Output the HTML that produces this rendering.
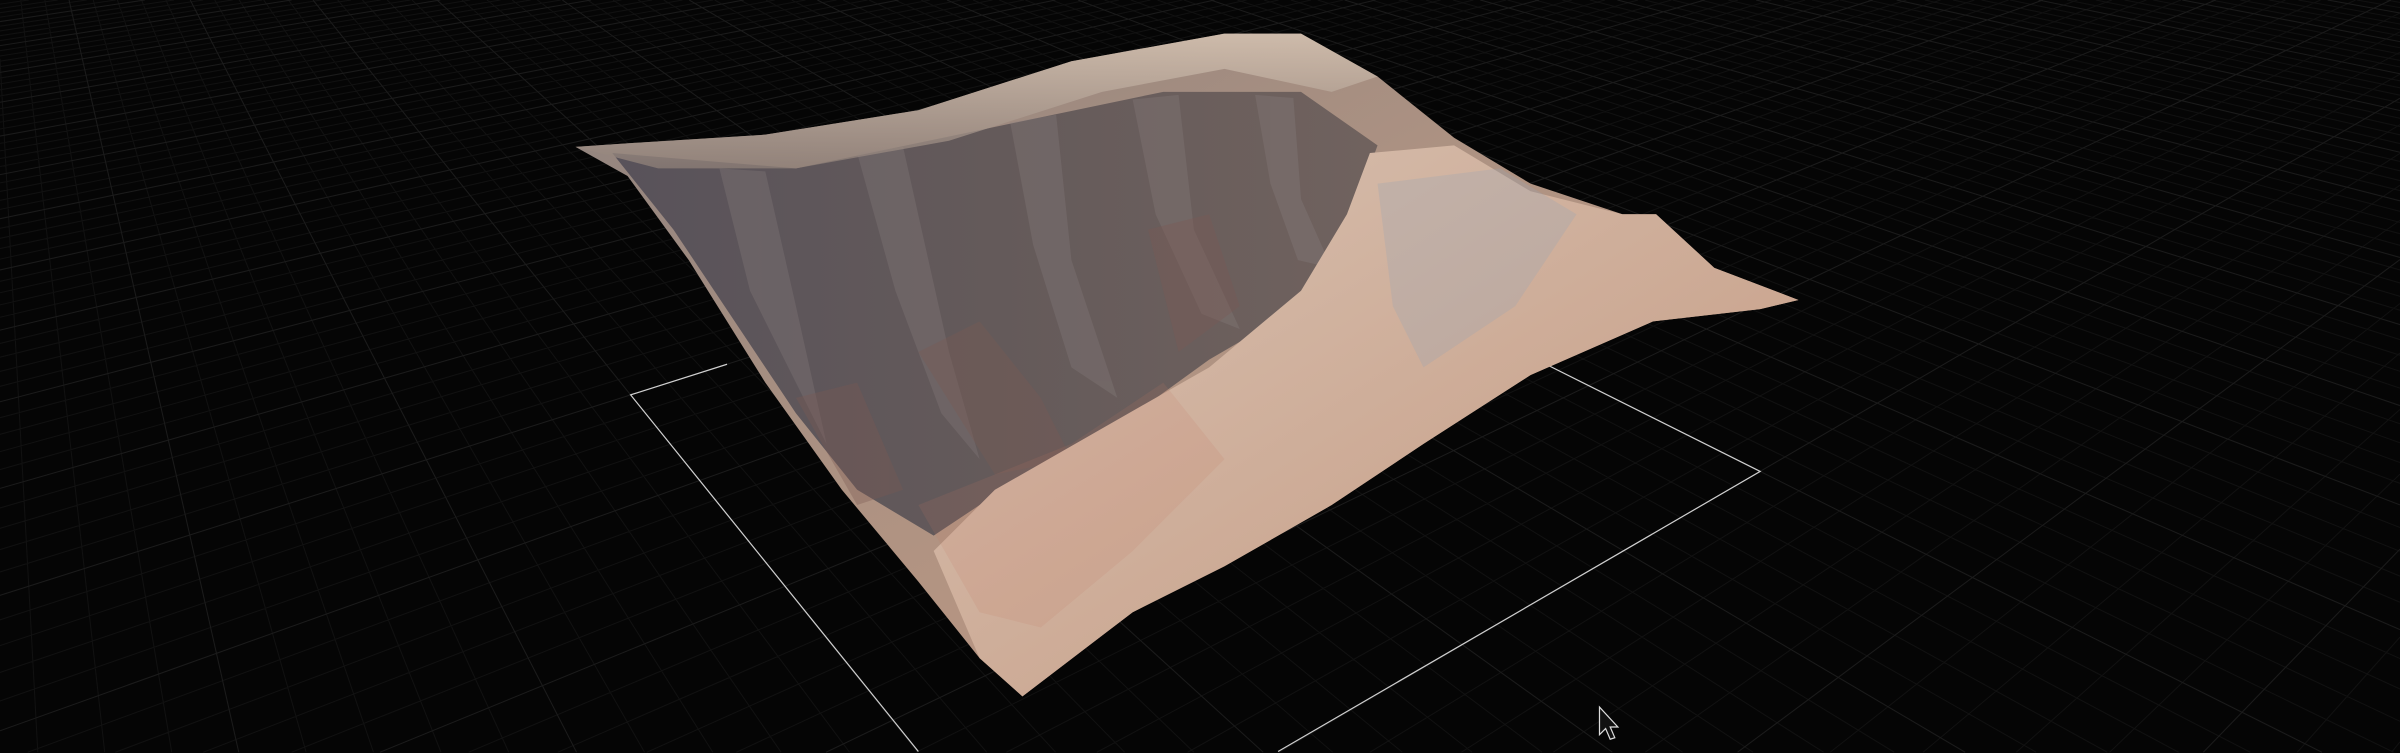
<!DOCTYPE html>
<html><head><meta charset="utf-8"><style>
html,body{margin:0;padding:0;background:#050505;width:2400px;height:753px;overflow:hidden}
#w{position:absolute;left:0;top:0;width:2400px;height:753px;overflow:hidden}
svg{display:block;overflow:hidden}
</style></head><body>
<div id="w">
<svg id="s" width="2400" height="753" viewBox="0 0 1568 492" preserveAspectRatio="none" xmlns="http://www.w3.org/2000/svg">
<defs>
<linearGradient id="base" x1="0" y1="0" x2="1" y2="1">
<stop offset="0" stop-color="#8e827e"/>
<stop offset="0.45" stop-color="#ad9282"/>
<stop offset="1" stop-color="#c79a82"/>
</linearGradient>
<linearGradient id="dark" x1="0" y1="0" x2="1" y2="0">
<stop offset="0" stop-color="#58525a"/>
<stop offset="0.5" stop-color="#645a5a"/>
<stop offset="1" stop-color="#70625e"/>
</linearGradient>
<linearGradient id="light" x1="0" y1="0" x2="1" y2="1">
<stop offset="0" stop-color="#d8c2b2"/>
<stop offset="0.6" stop-color="#cca994"/>
<stop offset="1" stop-color="#c6957c"/>
</linearGradient>
<linearGradient id="ridge" x1="0" y1="0" x2="0" y2="1">
<stop offset="0" stop-color="#dccab8"/>
<stop offset="1" stop-color="#8f8078"/>
</linearGradient>
</defs>
<rect width="1568" height="492" fill="#050505"/>
<path id="gmin" stroke="#111111" stroke-width="0.7" fill="none" d=""/>
<path id="gmaj" stroke="#1b1b1b" stroke-width="0.7" fill="none" d=""/>
<g stroke="#cfcfcf" stroke-width="0.8" fill="none">
<polyline points="475,238 412,258 600,491"/>
<polyline points="1010,238 1150,308 835,491"/>
</g>
<polygon fill="url(#base)" points="376,96 420,93 500,88 600,72 700,40 800,22 850,22 900,50 950,90 1000,120 1060,140 1082,140 1120,175 1175,196 1150,202 1080,210 1000,245 930,290 870,330 800,370 740,400 668,455 640,430 600,380 550,320 500,250 450,170 410,115"/>
<polygon fill="url(#dark)" points="400,100 520,110 640,85 760,60 850,60 900,95 880,150 850,200 790,235 700,300 640,330 610,350 560,320 520,270 480,210 440,150"/>
<g fill="#8a8080" opacity="0.3">
<polygon points="470,110 500,112 520,200 540,290 525,260 490,190"/>
<polygon points="560,100 590,96 620,230 640,300 615,270 585,190"/>
<polygon points="660,80 690,75 700,170 730,260 700,240 675,160"/>
<polygon points="740,65 770,62 780,150 810,215 785,205 755,140"/>
<polygon points="820,62 845,64 850,130 870,175 848,170 830,120"/>
</g>
<g fill="#7a5a52" opacity="0.35">
<polygon points="600,230 640,210 680,260 700,300 650,310"/>
<polygon points="750,150 790,140 810,200 770,230"/>
<polygon points="520,260 560,250 590,320 560,330"/>
</g>
<polygon fill="url(#light)" points="895,100 950,95 1000,125 1060,140 1082,140 1120,175 1175,196 1150,202 1080,210 1000,245 930,290 870,330 800,370 740,400 668,455 640,430 610,360 650,320 720,280 790,240 850,190 880,140"/>
<polygon fill="url(#ridge)" opacity="0.75" points="376,96 420,93 500,88 600,72 700,40 800,22 850,22 900,50 870,60 800,45 720,60 620,92 520,110 430,110"/>
<polygon fill="#9aa6b2" opacity="0.3" points="900,120 980,110 1030,140 990,200 930,240 910,200"/>
<polygon fill="#c47a62" opacity="0.15" points="600,330 700,290 760,250 800,300 740,360 680,410 640,400"/>
<path d="M1045,462 L1045,480 L1049,476 L1052,483 L1055,482 L1052,475 L1057,475 Z" fill="#111" stroke="#ddd" stroke-width="0.8"/>
</svg>
</div>
<script>
(function(){
var x=[412,802,1150,675], y=[258,134,308,585];
var dx1=x[1]-x[2],dx2=x[3]-x[2],dx3=x[0]-x[1]+x[2]-x[3];
var dy1=y[1]-y[2],dy2=y[3]-y[2],dy3=y[0]-y[1]+y[2]-y[3];
var den=dx1*dy2-dx2*dy1;
var g=(dx3*dy2-dx2*dy3)/den,h=(dx1*dy3-dx3*dy1)/den;
var a=x[1]-x[0]+g*x[1],b=x[3]-x[0]+h*x[3],c=x[0];
var d=y[1]-y[0]+g*y[1],e=y[3]-y[0]+h*y[3],f=y[0];
function P(u,v){var w=g*u+h*v+1;return [(a*u+b*v+c)/w,(d*u+e*v+f)/w];}
var N=20,R=40,eps=0.03,dmin='',dmaj='';
function clip(p,q){
  var x0=p[0],y0=p[1],ddx=q[0]-x0,ddy=q[1]-y0,t0=0,t1=1;
  var P4=[-ddx,ddx,-ddy,ddy],Q4=[x0-0,1568-x0,y0-0,491.5-y0];
  for(var i=0;i<4;i++){
    if(P4[i]===0){if(Q4[i]<0)return null;}
    else{var r=Q4[i]/P4[i]; if(P4[i]<0){if(r>t1)return null; if(r>t0)t0=r;} else {if(r<t0)return null; if(r<t1)t1=r;}}
  }
  return [[x0+t0*ddx,y0+t0*ddy],[x0+t1*ddx,y0+t1*ddy]];
}
function seg(fixU,k){
  var lo=-R,hi=R,t1,t2,ca,cb;
  if(fixU){ca=g*k+1;cb=h;}else{ca=h*k+1;cb=g;}
  if(Math.abs(cb)<1e-9){if(ca<eps)return null;t1=lo;t2=hi;}
  else{var tz=(eps-ca)/cb; if(cb>0){t1=Math.max(lo,tz);t2=hi;}else{t1=lo;t2=Math.min(hi,tz);} if(t1>=t2)return null;}
  var p1=fixU?P(k,t1):P(t1,k),p2=fixU?P(k,t2):P(t2,k);
  return clip(p1,p2);
}
for(var i=-R*N;i<=R*N;i++){
  var k=i/N, maj=(i%5===0);
  for(var m=0;m<2;m++){
    var s=seg(m===0,k); if(!s)continue;
    var str='M'+s[0][0].toFixed(1)+','+s[0][1].toFixed(1)+'L'+s[1][0].toFixed(1)+','+s[1][1].toFixed(1);
    if(maj)dmaj+=str; else dmin+=str;
  }
}
document.getElementById('gmin').setAttribute('d',dmin);
document.getElementById('gmaj').setAttribute('d',dmaj);
})();
</script>
</body></html>
